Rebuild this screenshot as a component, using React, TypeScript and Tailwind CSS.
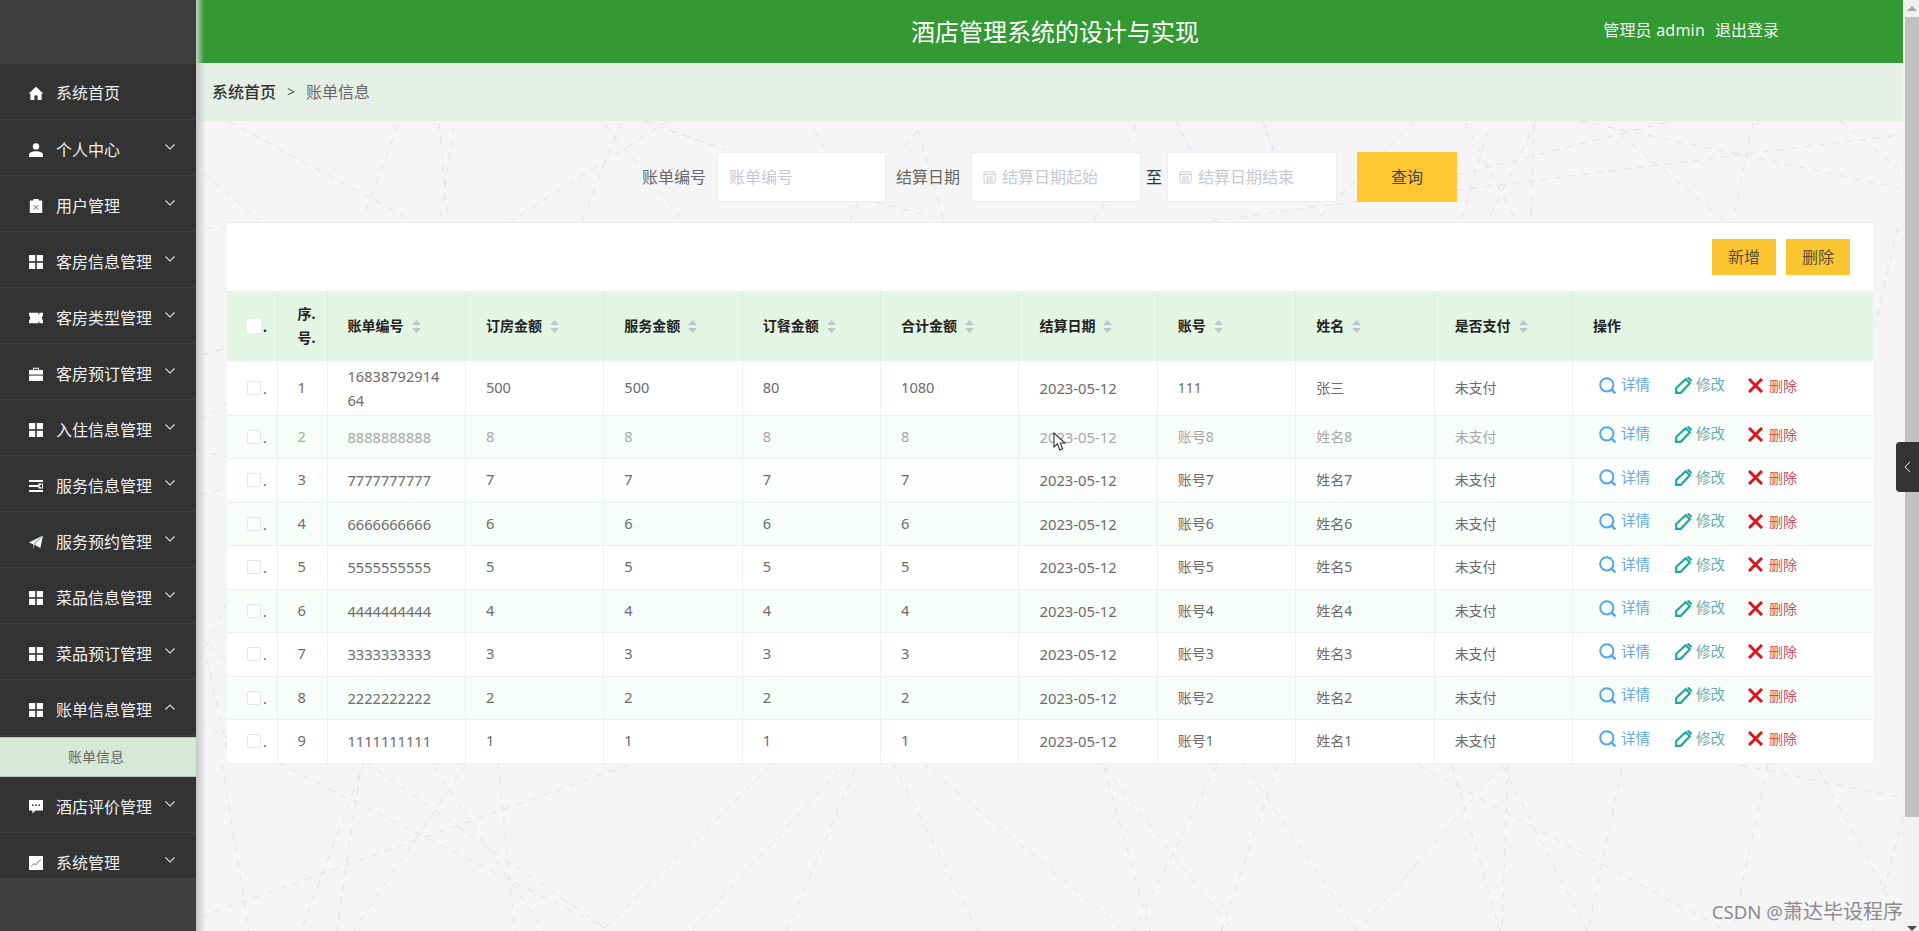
import type { ReactNode } from "react";

const bgLines: number[][] = [
  [222, 763, 249, 931], [200, 917, 634, 763], [278, 763, 605, 928], [364, 763, 301, 931],
  [366, 763, 605, 928], [360, 773, 337, 931], [466, 765, 353, 931], [434, 767, 544, 931],
  [498, 763, 515, 931], [605, 928, 770, 767], [692, 930, 843, 766], [787, 931, 857, 765],
  [893, 763, 978, 931], [922, 763, 1120, 927], [1104, 767, 1150, 931], [1104, 767, 1233, 931],
  [1217, 765, 1134, 931], [1278, 765, 1221, 931], [1243, 763, 1357, 931], [1416, 865, 1361, 927],
  [1418, 765, 1727, 931], [1452, 765, 1500, 931], [1502, 765, 1400, 883], [1508, 765, 1502, 931],
  [1502, 765, 1587, 931], [1622, 768, 1588, 931], [1740, 765, 1903, 798], [1768, 765, 1733, 927],
  [1818, 768, 1890, 900], [1903, 817, 1873, 931],
  [228, 121, 413, 221], [203, 173, 259, 220], [398, 125, 364, 216], [439, 123, 448, 220],
  [454, 126, 440, 221], [606, 125, 683, 221], [621, 123, 582, 221], [668, 121, 511, 221],
  [644, 121, 716, 146], [669, 130, 726, 150], [815, 130, 824, 147], [918, 130, 898, 153],
  [918, 130, 944, 220], [1180, 130, 1197, 163], [1266, 130, 1275, 153], [875, 202, 944, 220],
  [858, 203, 850, 220], [1105, 202, 1094, 220], [1136, 125, 1125, 150], [1176, 121, 1192, 151],
  [1263, 121, 1273, 151], [1414, 121, 1317, 220], [1212, 221, 1360, 201], [1457, 190, 1900, 135],
  [1457, 175, 1671, 121], [1465, 123, 1516, 220], [1488, 131, 1462, 218], [1536, 121, 1488, 221],
  [1534, 125, 1531, 220], [1580, 121, 1900, 188], [1610, 126, 1725, 221], [1753, 123, 1733, 221],
  [1840, 121, 1900, 170], [1898, 227, 1873, 335],
  [207, 228, 226, 227], [202, 355, 227, 348], [200, 420, 227, 403], [197, 450, 227, 457],
  [200, 495, 227, 488], [227, 602, 200, 660], [200, 637, 227, 663], [200, 723, 227, 737],
  [207, 660, 227, 750],
];

function HomeIcon() {
  return (
    <svg viewBox="0 0 14 14" className="h-[14px] w-[14px]" fill="#fff">
      <path d="M7 .8 14 7.2 12.6 8V14H8.6V9.4H5.4V14H1.4V8L0 7.2Z" />
    </svg>
  );
}

function UserIcon() {
  return (
    <svg viewBox="0 0 14 14" className="h-[14px] w-[14px]" fill="#fff">
      <circle cx="7" cy="3.4" r="3.2" />
      <path d="M0 14V11.6C0 9.6 3 8.2 7 8.2S14 9.6 14 11.6V14Z" />
    </svg>
  );
}

function OrderIcon() {
  return (
    <svg viewBox="0 0 14 14" className="h-[14px] w-[14px]">
      <path d="M.8 1.4H4.4V0H9.6V1.4H13.2V14H.8Z" fill="#fff" />
      <path d="M4.6 6 9.4 10.8M9.4 6 4.6 10.8" stroke="#555" strokeWidth="0.9" />
    </svg>
  );
}

function GridIcon() {
  return (
    <svg viewBox="0 0 14 14" className="h-[14px] w-[14px]" fill="#fff">
      <rect x="0" y="0" width="6.2" height="6.2" />
      <rect x="7.8" y="0" width="6.2" height="6.2" />
      <rect x="0" y="7.8" width="6.2" height="6.2" />
      <rect x="7.8" y="7.8" width="6.2" height="6.2" />
    </svg>
  );
}

function TicketIcon() {
  return (
    <svg viewBox="0 0 16 12" className="h-[12px] w-[16px]" fill="#fff">
      <path d="M0 0H10.4L11 2H11.8V0H16V3.4C14.6 3.8 14.6 8.2 16 8.6V12H11.8V10H11L10.4 12H0V8.6C1.8 8.2 1.8 3.8 0 3.4Z" />
    </svg>
  );
}

function CaseIcon() {
  return (
    <svg viewBox="0 0 14 14" className="h-[14px] w-[14px]" fill="#fff">
      <path d="M4 3V.8H10V3H9V1.8H5V3Z" />
      <path d="M0 3H14V7.6H0Z" />
      <path d="M0 8.6H14V14H0Z" />
    </svg>
  );
}

function ServiceIcon() {
  return (
    <svg viewBox="0 0 14 12" className="h-[12px] w-[14px]" fill="#fff">
      <rect width="14" height="2" />
      <rect y="10" width="14" height="2" />
      <path d="M0 5H9.4V3.4L14 3.4V8.6H9.4V7H0Z" />
      <path d="M10 6 13 4V8Z" fill="#333" />
    </svg>
  );
}

function PlaneIcon() {
  return (
    <svg viewBox="0 0 15 15" className="h-[15px] w-[15px]">
      <path d="M15 0 0 7.4 4.4 9.4Z" fill="#fff" />
      <path d="M15 0 6 10 12.2 13.4Z" fill="#fff" />
      <path d="M4.4 9.4 15 0 5.6 10.4 5 15Z" fill="#b8dcd4" />
    </svg>
  );
}

function CommentIcon() {
  return (
    <svg viewBox="0 0 14 14" className="h-[14px] w-[14px]">
      <path d="M0 0H14V10.6H6.6L3.4 13.6V10.6H0Z" fill="#fff" />
      <circle cx="3.8" cy="5.2" r="0.9" fill="#444" />
      <circle cx="7" cy="5.2" r="0.9" fill="#444" />
      <circle cx="10.2" cy="5.2" r="0.9" fill="#444" />
    </svg>
  );
}

function DataIcon() {
  return (
    <svg viewBox="0 0 14 14" className="h-[14px] w-[14px]">
      <rect width="14" height="14" fill="#fff" />
      <path d="M2.2 10.4 5 7.6 6.8 9 9.2 5.4 11.8 4" fill="none" stroke="#666" strokeWidth="0.9" />
    </svg>
  );
}

function Chevron({ up }: { up?: boolean }) {
  return (
    <svg viewBox="0 0 10 6" className="h-[6px] w-[10px]" fill="none" stroke="#ddd" strokeWidth="1.1">
      <path d={up ? "M.5 5.5 5 1 9.5 5.5" : "M.5.5 5 5 9.5.5"} />
    </svg>
  );
}

function CalendarIcon() {
  return (
    <svg viewBox="0 0 13 13" className="h-[13px] w-[13px]" fill="none" stroke="#c8cad1" strokeWidth="1">
      <rect x="1" y="1" width="11" height="11" rx="1" />
      <path d="M1 3.6H12M3 6H10M3 8H10M3 10H10" />
    </svg>
  );
}

function SortCaret() {
  return (
    <svg viewBox="0 0 9 13" className="ml-2 inline-block h-[13px] w-[9px] shrink-0" fill="#c0c4cc">
      <path d="M4.5 0 9 5H0Z" />
      <path d="M0 8H9L4.5 13Z" />
    </svg>
  );
}

function SearchIcon() {
  return (
    <svg viewBox="0 0 17 17" className="h-[17px] w-[17px] shrink-0" fill="none" stroke="#4fa8ee" strokeWidth="2">
      <circle cx="7.8" cy="7.8" r="6.6" />
      <path d="M12.6 12.6 16.4 16.4" strokeWidth="2.4" />
    </svg>
  );
}

function EditIcon() {
  return (
    <svg viewBox="0 0 17 17" className="h-[17px] w-[17px] shrink-0" fill="none" stroke="#20a8a0" strokeWidth="2.2">
      <path d="M1.2 11 10.6 2.2 14.8 6.2 5.8 15.8H1.2Z" />
      <path d="M12.6 .4 16.6 4.2" />
    </svg>
  );
}

function CloseIcon() {
  return (
    <svg viewBox="0 0 15 15" className="h-[15px] w-[15px] shrink-0" fill="none" stroke="#d8161e" strokeWidth="3">
      <path d="M1 1 14 14M14 1 1 14" />
    </svg>
  );
}

type MenuItem = { label: string; icon: ReactNode; arrow?: boolean; open?: boolean };

const menuItems: MenuItem[] = [
  { label: "系统首页", icon: <HomeIcon /> },
  { label: "个人中心", icon: <UserIcon />, arrow: true },
  { label: "用户管理", icon: <OrderIcon />, arrow: true },
  { label: "客房信息管理", icon: <GridIcon />, arrow: true },
  { label: "客房类型管理", icon: <TicketIcon />, arrow: true },
  { label: "客房预订管理", icon: <CaseIcon />, arrow: true },
  { label: "入住信息管理", icon: <GridIcon />, arrow: true },
  { label: "服务信息管理", icon: <ServiceIcon />, arrow: true },
  { label: "服务预约管理", icon: <PlaneIcon />, arrow: true },
  { label: "菜品信息管理", icon: <GridIcon />, arrow: true },
  { label: "菜品预订管理", icon: <GridIcon />, arrow: true },
  { label: "账单信息管理", icon: <GridIcon />, arrow: true, open: true },
  { label: "酒店评价管理", icon: <CommentIcon />, arrow: true },
  { label: "系统管理", icon: <DataIcon />, arrow: true },
];

const columns = ["账单编号", "订房金额", "服务金额", "订餐金额", "合计金额", "结算日期", "账号", "姓名", "是否支付"];

const rows = [
  { no: 1, code: "16838792914", code2: "64", room: "500", service: "500", meal: "80", total: "1080", account: "111", name: "张三" },
  ...[8, 7, 6, 5, 4, 3, 2, 1].map((n, i) => ({
    no: i + 2,
    code: String(n).repeat(10),
    code2: "",
    room: String(n),
    service: String(n),
    meal: String(n),
    total: String(n),
    account: "账号" + n,
    name: "姓名" + n,
  })),
];

function Sidebar() {
  return (
    <aside className="flex h-[931px] w-[196px] shrink-0 flex-col bg-[#403e41]">
      <div className="h-16 shrink-0" />
      <nav className="h-[814px] overflow-hidden bg-[#333333]">
        {menuItems.map((item, i) => (
          <div key={item.label}>
            <div
              className={
                "flex h-14 items-center border-b border-[#3f3f3f] pl-[29px] text-base text-[#f0f0f0] " +
                (i === 0 ? "pt-[3px]" : "pt-[5px]")
              }
            >
              <span className="flex w-[14px] justify-center">{item.icon}</span>
              <span className="ml-[13px]">{item.label}</span>
              {item.arrow && (
                <span className="mr-[21px] -mt-[6px] ml-auto flex">
                  <Chevron up={item.open} />
                </span>
              )}
            </div>
            {item.open && (
              <div className="mt-px flex h-10 items-center justify-center border-y border-[#b9c4ba] bg-[#d5e9d6] pr-1 text-sm text-[#666]">
                账单信息
              </div>
            )}
          </div>
        ))}
      </nav>
    </aside>
  );
}

function DateInput({ placeholder }: { placeholder: string }) {
  return (
    <div className="flex h-[50px] w-[170px] items-center border border-[#eeeef0] bg-white pl-[11px]">
      <CalendarIcon />
      <input readOnly placeholder={placeholder} className="ml-[6px] w-[120px] text-base outline-none placeholder:text-[#c6c8cf]" />
    </div>
  );
}

function SearchBar() {
  return (
    <div className="mt-[31px] ml-[446px] flex h-[50px] items-center text-base text-[#666]">
      <span>账单编号</span>
      <input
        readOnly
        placeholder="账单编号"
        className="ml-[11px] h-[50px] w-[169px] border border-[#eeeef0] bg-white pl-[11px] text-base outline-none placeholder:text-[#c6c8cf]"
      />
      <span className="ml-[10px]">结算日期</span>
      <div className="ml-[11px]">
        <DateInput placeholder="结算日期起始" />
      </div>
      <span className="mx-[5px] text-[#333]">至</span>
      <DateInput placeholder="结算日期结束" />
      <button className="ml-5 h-[50px] w-[100px] bg-[#ffc832] text-base text-[#444]">查询</button>
    </div>
  );
}

function Actions() {
  return (
    <div className="-mt-[5px] flex items-center pl-[26px] text-[14.6px]">
      <span className="flex w-[76px] items-center gap-[5px] text-[#64a8e2]">
        <SearchIcon />
        详情
      </span>
      <span className="flex w-[73px] items-center gap-1 text-[#6cadb6]">
        <EditIcon />
        修改
      </span>
      <span className="flex items-center gap-[6px] text-[14px] text-[#c9525e]">
        <CloseIcon />
        删除
      </span>
    </div>
  );
}

function BillTable() {
  const cell = "border-r border-[#eaf3ec] pl-5 align-middle ";
  return (
    <table className="w-[1646px] table-fixed">
      <thead>
        <tr className="h-[70px] bg-[#e3f6e3] text-left text-sm font-bold text-[#222]">
          <th className="w-[50px] border-r border-[#d9efdc] pl-5">
            <span className="flex items-end">
              <span className="h-[14px] w-[14px] rounded-[2px] bg-white" />
              <span className="ml-0.5 leading-[12px]">.</span>
            </span>
          </th>
          <th className="w-[50px] border-r border-[#d9efdc] pl-5 leading-6">
            序.
            <br />
            号.
          </th>
          {columns.map((c) => (
            <th key={c} className="w-[138.4px] border-r border-[#d9efdc] pl-5">
              <span className="flex items-center">
                {c}
                <SortCaret />
              </span>
            </th>
          ))}
          <th className="pl-5">操作</th>
        </tr>
      </thead>
      <tbody>
        {rows.map((r) => {
          const tone = r.no === 2 ? "text-[#a8a8a8]" : "text-[#6c6c6c]";
          const bg = r.no % 2 === 0 ? "bg-[#f8fdf9]" : r.no === 3 ? "bg-[#fbfefc]" : "bg-white";
          return (
            <tr key={r.no} className={"border-b border-[#edf2ee] " + bg + " " + (r.no === 1 ? "h-[54px]" : "h-[43.5px]")}>
              <td className={cell}>
                <span className="flex items-end">
                  <span className="h-[14px] w-[14px] rounded-[2px] border border-[#e4e7ed] bg-white" />
                  <span className="ml-0.5 text-sm leading-[12px] text-[#666]">.</span>
                </span>
              </td>
              <td className={cell + "text-[14.6px] " + tone}>{r.no}</td>
              <td className={cell + "text-[14.6px] leading-6 " + tone}>
                {r.code}
                {r.code2 && <br />}
                {r.code2}
              </td>
              <td className={cell + "text-[14.6px] " + tone}>{r.room}</td>
              <td className={cell + "text-[14.6px] " + tone}>{r.service}</td>
              <td className={cell + "text-[14.6px] " + tone}>{r.meal}</td>
              <td className={cell + "text-[14.6px] " + tone}>{r.total}</td>
              <td className={cell + "text-[14.8px] " + tone}>2023-05-12</td>
              <td className={cell + "text-sm " + tone}>{r.account}</td>
              <td className={cell + "text-sm " + tone}>{r.name}</td>
              <td className={cell + "text-sm " + tone}>未支付</td>
              <td className="align-middle">
                <Actions />
              </td>
            </tr>
          );
        })}
      </tbody>
    </table>
  );
}

export default function App() {
  return (
    <div className="relative flex h-[931px] w-[1919px] overflow-hidden bg-[#f5f5f7] font-['Noto_Sans','Noto_Sans_CJK_SC',sans-serif]">
      <Sidebar />

      <div className="relative flex min-w-0 flex-1 flex-col">
        <svg
          className="pointer-events-none absolute top-0 -left-[196px] h-[931px] w-[1919px]"
          viewBox="0 0 1919 931"
          fill="none"
          stroke="#e2e2e6"
          strokeWidth="1"
          strokeDasharray="7 7"
        >
          {bgLines.map((l, i) => (
            <line key={i} x1={l[0]} y1={l[1]} x2={l[2]} y2={l[3]} />
          ))}
        </svg>

        <header className="relative flex h-[63px] shrink-0 items-center bg-[#339933] text-white">
          <h1 className="ml-[715px] text-2xl leading-none font-normal">酒店管理系统的设计与实现</h1>
          <div className="mr-[124px] -mt-[3px] ml-auto flex text-base text-[#eef6ee]">
            <span className="tracking-[0.2px]">管理员 admin</span>
            <span className="ml-[10px]">退出登录</span>
          </div>
        </header>

        <div className="relative flex h-[58px] shrink-0 items-center bg-[#e6efe6] pl-4 text-base">
          <span className="font-medium text-[#333]">系统首页</span>
          <span className="ml-[11px] text-sm text-[#555]">&gt;</span>
          <span className="ml-[11px] text-[#666]">账单信息</span>
        </div>

        <div className="relative flex-1">
          <SearchBar />
          <section className="mt-5 ml-[31px] h-[541px] w-[1646px] border-t border-[#ececee] bg-white">
            <div className="flex h-[68px] justify-end gap-[10px] pt-4 pr-[23px]">
              <button className="h-9 w-16 bg-[#fcc532] text-base text-[#5c4f2e]">新增</button>
              <button className="h-9 w-16 bg-[#fcc532] text-base text-[#5c4f2e]">删除</button>
            </div>
            <BillTable />
          </section>
        </div>

        {/* sidebar shadow over the page */}
        <div className="pointer-events-none absolute top-0 left-0 h-[63px] w-2 bg-gradient-to-r from-[#c4d4c4] to-transparent" />
        <div className="pointer-events-none absolute top-[63px] bottom-0 left-0 w-[10px] bg-gradient-to-r from-[#c6c6c8] to-transparent" />
      </div>

      {/* scrollbar */}
      <div className="relative flex w-4 shrink-0 flex-col items-end bg-[#f1f1f1]">
        <div className="flex h-[17px] w-[14px] items-center justify-center">
          <div className="h-0 w-0 border-x-[5px] border-b-[5px] border-x-transparent border-b-[#a3a3a3]" />
        </div>
        <div className="h-[800px] w-[14px] bg-[#c1c1c1]" />
        <div className="mt-auto flex h-[17px] w-[14px] items-center justify-center pt-[11px]">
          <div className="h-0 w-0 border-x-[5px] border-t-[5px] border-x-transparent border-t-[#505050]" />
        </div>
      </div>

      {/* collapse handle */}
      <div className="absolute top-[442px] right-0 flex h-[50px] w-[23px] items-center justify-center rounded-l-[4px] bg-[#333]">
        <svg viewBox="0 0 7 12" className="h-3 w-[7px]" fill="none" stroke="#eee" strokeWidth="1">
          <path d="M6 .8 1 6 6 11.2" />
        </svg>
      </div>

      {/* mouse pointer */}
      <svg className="absolute top-[432px] left-[1053px] h-5 w-[14px]" viewBox="0 0 14 20">
        <path d="M1 1V15L4.4 11.8 6.8 18 9.6 16.8 7.2 11H12Z" fill="#fff" stroke="#333" strokeWidth="1.1" />
      </svg>

      <div className="absolute top-[898px] right-4 text-[20px] leading-7 text-[#8c8c8c]">
        <span className="text-[18.6px]">CSDN @</span>萧达毕设程序
      </div>
    </div>
  );
}
